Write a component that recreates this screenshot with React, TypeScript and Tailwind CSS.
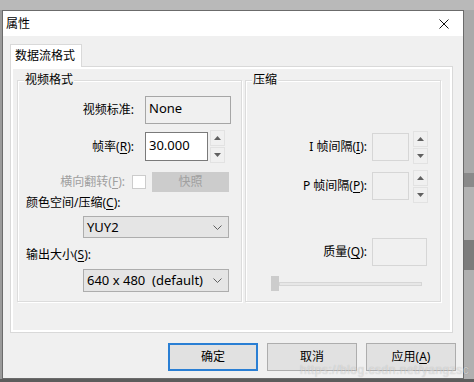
import React from "react";

const font = { fontFamily: '"Noto Sans", "Noto Sans CJK SC", sans-serif' };

function SpinButtons() {
  return (
    <div className="flex flex-col gap-[1px] self-start -mt-[2px]">
      {["up", "down"].map((d) => (
        <div
          key={d}
          className="w-[15px] h-[16px] bg-[#f0f0f0] border border-[#e2e2e2] flex items-center justify-center"
        >
          <svg width="7" height="4" viewBox="0 0 7 4">
            {d === "up" ? (
              <polygon points="0,4 7,4 3.5,0" fill="#606060" />
            ) : (
              <polygon points="0,0 7,0 3.5,4" fill="#606060" />
            )}
          </svg>
        </div>
      ))}
    </div>
  );
}

function Chevron() {
  return (
    <svg width="9" height="5" viewBox="0 0 9 5" className="mr-[6px]">
      <polyline points="0.5,0.5 4.5,4.5 8.5,0.5" fill="none" stroke="#606060" strokeWidth="1" />
    </svg>
  );
}

function Select({ value }: { value: string }) {
  return (
    <div className="flex items-center justify-between ml-[65px] w-[146px] h-full bg-[#e5e5e5] border border-[#adadad] pl-[3px]">
      <span className="text-[13px] leading-none text-black whitespace-pre">{value}</span>
      <Chevron />
    </div>
  );
}

function Group({
  label,
  className,
  children,
}: {
  label: string;
  className: string;
  children: React.ReactNode;
}) {
  return (
    <div
      className={`relative border border-[#dcdcdc] shadow-[inset_1px_1px_0_#ffffff,1px_1px_0_#ffffff] flex flex-col ${className}`}
    >
      <span className="absolute -top-[9px] left-[6px] bg-[#f0f0f0] px-[1px] text-[12px] leading-[16px] text-black">
        {label}
      </span>
      {children}
    </div>
  );
}

function Btn({ label, primary }: { label: React.ReactNode; primary?: boolean }) {
  return (
    <div
      className={`w-[90px] h-[28px] flex items-center justify-center bg-[#e1e1e1] text-[12px] text-black ${
        primary ? "border-2 border-[#2a7fd4]" : "border border-[#adadad]"
      }`}
    >
      {label}
    </div>
  );
}

export default function App() {
  return (
    <div className="relative w-[474px] h-[382px] bg-[#b6b6b6] overflow-hidden flex flex-col" style={font}>
      <div className="h-[10px] bg-[#b9b9b9] shrink-0" />
      <div className="flex h-[369px] shrink-0">
        <div className="w-[2px] bg-[#9a9a9a]" />
        <div className="w-[462px] h-full border border-[#6b6b6b] flex flex-col bg-[#f0f0f0]">
          {/* title bar */}
          <div className="h-[25px] bg-white flex items-center justify-between pl-[3px] pr-[14px] shrink-0">
            <span className="text-[12px] text-black leading-none">属性</span>
            <svg width="10" height="10" viewBox="0 0 10 10">
              <line x1="0.5" y1="0.5" x2="9.5" y2="9.5" stroke="#111" strokeWidth="1" />
              <line x1="9.5" y1="0.5" x2="0.5" y2="9.5" stroke="#111" strokeWidth="1" />
            </svg>
          </div>
          {/* body */}
          <div className="flex-1 flex flex-col pl-[7px] pr-[7px] pt-[8px]">
            {/* tab header */}
            <div className="flex relative z-10">
              <div className="w-[72px] h-[23px] bg-white border border-b-0 border-[#d9d9d9] flex items-center pl-[4px] -mb-px">
                <span className="text-[12px] text-black leading-none">数据流格式</span>
              </div>
            </div>
            {/* tab panel */}
            <div className="w-[443px] h-[267px] border border-[#d9d9d9] bg-white p-[2px]">
              <div className="w-full h-full bg-[#f0f0f0] flex gap-[3px] pl-[4px] pt-[11px]">
                {/* left group */}
                <Group label="视频格式" className="w-[225px] h-[222px]">
                  <div className="flex items-center h-[28px] mt-[15px]">
                    <span className="w-[116px] text-right text-[12px] text-black">视频标准:</span>
                    <div className="ml-[11px] w-[86px] h-full bg-[#f0f0f0] border border-[#a6a6a6] pl-[3px] pt-[2px] text-[13px] leading-[18px] text-black">
                      None
                    </div>
                  </div>
                  <div className="flex items-center h-[29px] mt-[8px]">
                    <span className="w-[116px] text-right text-[12px] text-black">
                      帧率(<span className="underline underline-offset-2">R</span>):
                    </span>
                    <div className="ml-[11px] w-[63px] h-full bg-white border border-[#7a7a7a] pl-[3px] pt-[3px] text-[13px] leading-[18px] text-black">
                      30.000
                    </div>
                    <div className="ml-[2px] h-full flex">
                      <SpinButtons />
                    </div>
                  </div>
                  <div className="flex items-center h-[20px] mt-[11px]">
                    <span className="w-[107px] text-right text-[12px] text-[#a0a0a0]">
                      横向翻转(<span className="underline underline-offset-2">F</span>):
                    </span>
                    <div className="ml-[7px] w-[14px] h-[14px] bg-white border border-[#cccccc]" />
                    <div className="ml-[6px] w-[77px] h-full bg-[#cccccc] flex items-center justify-center text-[12px] text-[#a0a0a0]">
                      快照
                    </div>
                  </div>
                  <div className="h-[16px] mt-[3px] pl-[8px] text-[12px] leading-[16px] text-black">
                    颜色空间/压缩(<span className="underline underline-offset-2">C</span>):
                  </div>
                  <div className="h-[22px] mt-[5px] flex">
                    <Select value="YUY2" />
                  </div>
                  <div className="h-[16px] mt-[9px] pl-[8px] text-[12px] leading-[16px] text-black">
                    输出大小(<span className="underline underline-offset-2">S</span>):
                  </div>
                  <div className="h-[23px] mt-[6px] flex">
                    <Select value="640 x 480  (default)" />
                  </div>
                </Group>
                {/* right group */}
                <Group label="压缩" className="w-[196px] h-[222px]">
                  <div className="flex items-center h-[28px] mt-[52px]">
                    <span className="w-[121px] text-right text-[12px] text-black">
                      I 帧间隔(<span className="underline underline-offset-2">I</span>):
                    </span>
                    <div className="ml-[5px] w-[37px] h-full bg-[#f0f0f0] border border-[#d6d6d6]" />
                    <div className="ml-[4px] h-full flex">
                      <SpinButtons />
                    </div>
                  </div>
                  <div className="flex items-center h-[28px] mt-[11px]">
                    <span className="w-[121px] text-right text-[12px] text-black">
                      P 帧间隔(<span className="underline underline-offset-2">P</span>):
                    </span>
                    <div className="ml-[5px] w-[37px] h-full bg-[#f0f0f0] border border-[#d6d6d6]" />
                    <div className="ml-[4px] h-full flex">
                      <SpinButtons />
                    </div>
                  </div>
                  <div className="flex items-center h-[28px] mt-[38px]">
                    <span className="w-[121px] text-right text-[12px] text-black">
                      质量(<span className="underline underline-offset-2">Q</span>):
                    </span>
                    <div className="ml-[5px] w-[55px] h-full bg-[#f0f0f0] border border-[#d6d6d6]" />
                  </div>
                  <div className="flex items-center h-[15px] mt-[10px] ml-[25px]">
                    <div className="w-[8px] h-full bg-[#cccccc]" />
                    <div className="w-[143px] h-[4px] bg-[#e7e7e7] border border-[#d6d6d6]" />
                  </div>
                </Group>
              </div>
            </div>
            {/* buttons */}
            <div className="flex justify-end gap-[9px] mt-[10px]">
              <Btn label="确定" primary />
              <Btn label="取消" />
              <Btn
                label={
                  <span>
                    应用(<span className="underline underline-offset-2">A</span>)
                  </span>
                }
              />
            </div>
          </div>
        </div>
        <div className="flex-1 flex flex-col">
          <div className="h-[163px] bg-[#aaaaaa]" />
          <div className="h-[14px] bg-[#8a8a8a]" />
          <div className="h-[53px] bg-[#b3b3b3]" />
          <div className="h-[30px] bg-[#7c7c7c]" />
          <div className="flex-1 bg-[#b0b0b0]" />
        </div>
      </div>
      <div className="flex-1 bg-[#5c5c5c]" />
      <span
        className="absolute left-[300px] top-[364px] text-[12px] leading-none text-white/50 tracking-[0.5px]"
        style={{ fontFamily: '"Liberation Sans", sans-serif', textShadow: "0 0 1px rgba(0,0,0,0.25)" }}
      >
        https://blog.csdn.net/yangzsc
      </span>
    </div>
  );
}
